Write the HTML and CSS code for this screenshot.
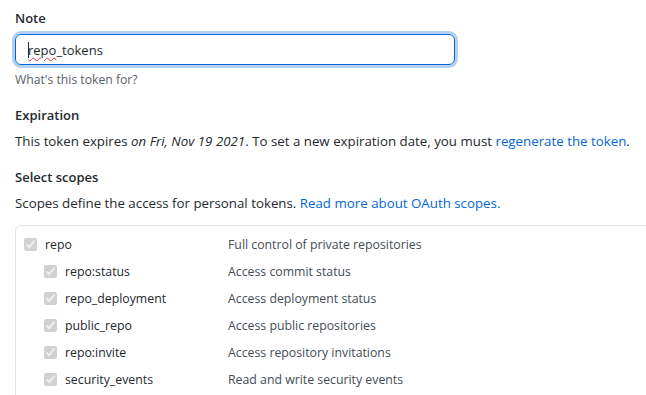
FILE: index.html
```html
<!DOCTYPE html>
<html>
<head>
<meta charset="utf-8">
<link rel="stylesheet" href="styles.css">
</head>
<body>
<div class="page">
  <div class="group">
    <label class="label">Note</label>
    <div class="input"><span class="caret"></span><span class="typo">repo</span>_tokens</div>
    <p class="note">What's this token for?</p>
  </div>
  <div class="group">
    <h3 class="label">Expiration</h3>
    <p class="text">This token expires <em>on Fri, Nov 19 2021</em>. To set a new expiration date, you must <a href="#">regenerate the token</a>.</p>
  </div>
  <div class="group last">
    <h3 class="label">Select scopes</h3>
    <p class="text">Scopes define the access for personal tokens. <a href="#">Read more about OAuth scopes.</a></p>
  </div>
  <div class="scopes">
    <div class="row top"><span class="name"><input type="checkbox" checked disabled>repo</span><span class="desc">Full control of private repositories</span></div>
    <div class="row sub"><span class="name"><input type="checkbox" checked disabled>repo:status</span><span class="desc">Access commit status</span></div>
    <div class="row sub"><span class="name"><input type="checkbox" checked disabled>repo_deployment</span><span class="desc">Access deployment status</span></div>
    <div class="row sub"><span class="name"><input type="checkbox" checked disabled>public_repo</span><span class="desc">Access public repositories</span></div>
    <div class="row sub"><span class="name"><input type="checkbox" checked disabled>repo:invite</span><span class="desc">Access repository invitations</span></div>
    <div class="row sub"><span class="name"><input type="checkbox" checked disabled>security_events</span><span class="desc">Read and write security events</span></div>
  </div>
</div>
</body>
</html>
```
FILE: styles.css
```css
html, body { margin: 0; padding: 0; background: #fff; overflow: hidden; }
body { font-family: "Open Sans", "Noto Sans", sans-serif; font-size: 13.3px; color: #24292e; }
.page { padding: 8px 0 0 15px; }
.label { display: block; font-size: 13px; font-weight: 600; margin: 0; line-height: 20px; }
.input {
  margin-top: 6px; width: 440px; height: 31px; box-sizing: border-box;
  border: 1px solid #0366d6; border-radius: 6px;
  box-shadow: 0 0 0 3px rgba(3,102,214,0.3);
  padding: 0 12px; line-height: 30px; font-size: 13px;
}
.caret { display: inline-block; width: 1px; height: 16px; background: #24292e; vertical-align: -3px; margin-right: -1px; }
.typo { text-decoration: underline wavy #d73a49; text-decoration-thickness: 1px; text-underline-offset: 2px; }
.note { margin: 6px 0 0; color: #586069; font-size: 12.2px; line-height: 18px; }
.group { margin-bottom: 16px; }
.group.last { margin-bottom: 12px; }
.text { margin: 6px 0 0; line-height: 20px; }
em { font-style: italic; }
a { color: #0366d6; text-decoration: none; }
.scopes { border: 1px solid #e1e4e8; border-right: none; border-bottom: none; border-radius: 6px 0 0 0; padding: 5px 0 0 8px; height: 200px; font-size: 12.3px; }
.row { display: flex; height: 27px; align-items: center; }
.name { width: 204px; display: flex; align-items: center; }
.sub .name { padding-left: 20px; width: 184px; }
.name input { margin: 0 8px 0 0; width: 13px; height: 13px; }
.desc { color: #444d56; }
```
